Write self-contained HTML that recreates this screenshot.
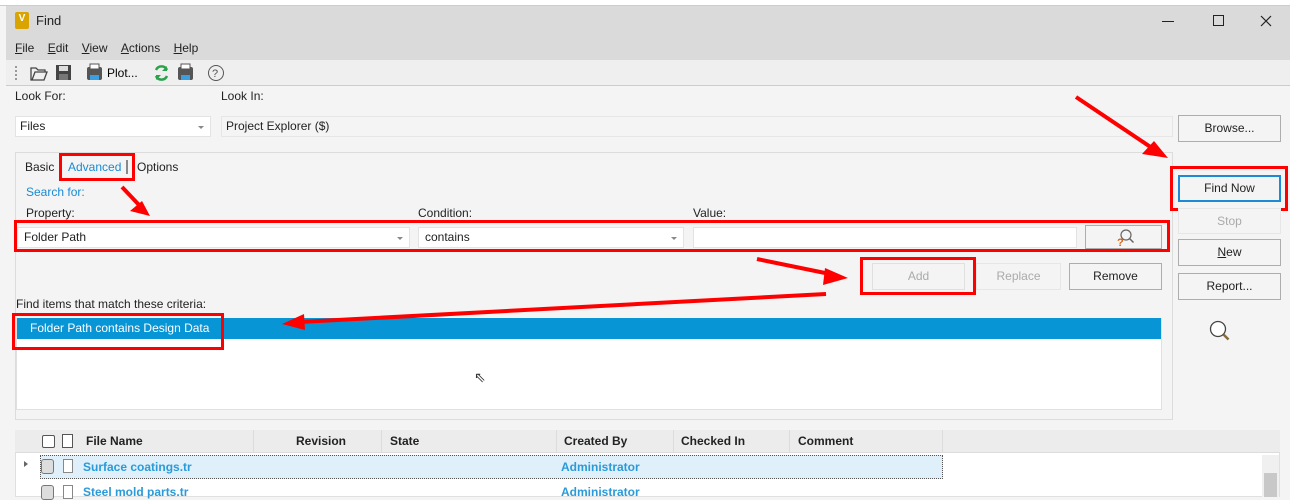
<!DOCTYPE html>
<html><head><style>
*{margin:0;padding:0;box-sizing:border-box}
body{width:1290px;height:497px;overflow:hidden;background:#f4f4f4;font-family:"Liberation Sans",sans-serif;font-size:12px;color:#222;position:relative}
.a{position:absolute}
.btn{position:absolute;border:1px solid #adadad;background:#f4f4f4;text-align:center;font-size:12px;color:#222}
.cb{position:absolute;background:#fff;border:1px solid #e3e3e3;padding-left:6px;font-size:12px}
.cb:after{content:"";position:absolute;right:6px;top:9px;border:3px solid transparent;border-top:3px solid #888}
.red{position:absolute;border:3px solid #f00}
.hd{position:absolute;top:430px;height:23px;line-height:23px;font-weight:bold;font-size:12px;border-right:1px solid #dcdcdc}
</style></head><body>
<div class="a" style="left:0;top:0;width:1290px;height:6px;background:#fff;border-bottom:1px solid #ccc"></div>
<div class="a" style="left:6px;top:6px;width:1284px;height:54px;background:#dadada"></div>
<div class="a" style="left:15px;top:12px;width:14px;height:17px;background:#d9a400;border-radius:2px;color:#fff;font-size:10px;font-weight:bold;text-align:center;line-height:13px">V</div>
<div class="a" style="left:36px;top:13px;font-size:13px">Find</div>
<div class="a" style="left:1162px;top:21px;width:12px;height:1px;background:#222"></div>
<div class="a" style="left:1213px;top:15px;width:11px;height:11px;border:1px solid #222"></div>
<svg class="a" style="left:1260px;top:15px" width="12" height="12"><path d="M1 1l10 10M11 1L1 11" stroke="#222" stroke-width="1.2"/></svg>
<div class="a" style="left:15px;top:41px;font-size:12px;word-spacing:0"><u>F</u>ile&nbsp;&nbsp;&nbsp;&nbsp;<u>E</u>dit&nbsp;&nbsp;&nbsp;&nbsp;<u>V</u>iew&nbsp;&nbsp;&nbsp;&nbsp;<u>A</u>ctions&nbsp;&nbsp;&nbsp;&nbsp;<u>H</u>elp</div>
<div class="a" style="left:6px;top:60px;width:1284px;height:26px;background:#efefef;border-bottom:1px solid #ccc"></div>
<div class="a" style="left:15px;top:66px;width:2px;height:14px;border-left:2px dotted #999"></div>
<svg class="a" style="left:28px;top:62px" width="200" height="22"><path d="M3 6h5l2 2h7v2H7l-3 8H3z M4 18l3-8h12l-3 8z" fill="none" stroke="#444" stroke-width="1.3"/><rect x="28" y="3" width="15" height="15" fill="#444"/><rect x="31" y="4" width="9" height="5" fill="#ddd"/><rect x="31" y="12" width="9" height="6" fill="#777"/><rect x="59" y="5" width="15" height="13" fill="#555" rx="2"/><rect x="62" y="2" width="9" height="5" fill="#fff" stroke="#555"/><rect x="62" y="13" width="9" height="5" fill="#3a9ee0"/><text x="79" y="15" font-size="12" font-family="Liberation Sans">Plot...</text><path d="M128 8a6 6 0 0 1 11 0M139 14a6 6 0 0 1-11 0" stroke="#2aa34a" stroke-width="2.5" fill="none"/><path d="M139 4v5h-5M128 18v-5h5" fill="#2aa34a"/><rect x="150" y="5" width="15" height="13" fill="#555" rx="2"/><rect x="153" y="2" width="9" height="5" fill="#fff" stroke="#555"/><rect x="153" y="13" width="9" height="5" fill="#3a9ee0"/><circle cx="188" cy="11" r="7.5" fill="none" stroke="#555"/><text x="184" y="15" font-size="11" fill="#555" font-family="Liberation Sans">?</text></svg>
<div class="a" style="left:15px;top:89px">Look For:</div>
<div class="a" style="left:221px;top:89px">Look In:</div>
<div class="cb" style="left:15px;top:116px;width:196px;height:21px;line-height:19px;padding-left:4px">Files</div>
<div class="a" style="left:221px;top:116px;width:952px;height:21px;line-height:19px;border:1px solid #e6e6e6;padding-left:4px">Project Explorer ($)</div>
<div class="btn" style="left:1178px;top:115px;width:103px;height:27px;line-height:25px">Browse...</div>
<div class="a" style="left:15px;top:152px;width:1158px;height:268px;border:1px solid #dcdcdc"></div>
<div class="a" style="left:25px;top:160px">Basic</div>
<div class="a" style="left:68px;top:160px;color:#1a8ad4">Advanced</div>
<div class="a" style="left:126px;top:160px;width:2px;height:14px;background:#888"></div>
<div class="a" style="left:137px;top:160px">Options</div>
<div class="red" style="left:59px;top:153px;width:76px;height:28px"></div>
<div class="a" style="left:26px;top:185px;color:#1a8ad4">Search for:</div>
<div class="a" style="left:26px;top:206px">Property:</div>
<div class="a" style="left:418px;top:206px">Condition:</div>
<div class="a" style="left:693px;top:206px">Value:</div>
<div class="cb" style="left:17px;top:227px;width:393px;height:21px;line-height:19px">Folder Path</div>
<div class="cb" style="left:418px;top:227px;width:266px;height:21px;line-height:19px">contains</div>
<div class="a" style="left:693px;top:227px;width:384px;height:21px;background:#fff;border:1px solid #e3e3e3"></div>
<div class="btn" style="left:1085px;top:225px;width:77px;height:24px"><svg width="24" height="20" style="margin-top:1px"><circle cx="14" cy="8" r="5" fill="none" stroke="#666" stroke-width="1.2"/><path d="M17.5 11.5l4 4" stroke="#666" stroke-width="1.5"/><text x="5" y="19" font-size="11" font-weight="bold" fill="#e06010" font-family="Liberation Sans">?</text></svg></div>
<div class="red" style="left:14px;top:220px;width:1156px;height:32px"></div>
<div class="btn" style="left:872px;top:263px;width:93px;height:27px;line-height:25px;color:#aaa;border-color:#e0e0e0">Add</div>
<div class="btn" style="left:976px;top:263px;width:85px;height:27px;line-height:25px;color:#aaa;border-color:#e6e6e6">Replace</div>
<div class="btn" style="left:1069px;top:263px;width:93px;height:27px;line-height:25px">Remove</div>
<div class="red" style="left:860px;top:257px;width:116px;height:38px"></div>
<div class="a" style="left:16px;top:297px">Find items that match these criteria:</div>
<div class="a" style="left:16px;top:318px;width:1146px;height:92px;background:#fff;border:1px solid #e0e0e0"></div>
<div class="a" style="left:17px;top:318px;width:1144px;height:21px;background:#0895d6;color:#fff;line-height:21px;padding-left:13px">Folder Path contains Design Data</div>
<div class="red" style="left:12px;top:313px;width:212px;height:37px"></div>
<div class="a" style="left:474px;top:369px;font-size:14px;color:#333">⇖</div>
<div class="btn" style="left:1178px;top:175px;width:103px;height:27px;line-height:23px;border:2px solid #1d8ad6">Find Now</div>
<div class="red" style="left:1170px;top:166px;width:118px;height:45px"></div>
<div class="btn" style="left:1178px;top:208px;width:103px;height:26px;line-height:24px;color:#aaa;border-color:#e6e6e6">Stop</div>
<div class="btn" style="left:1178px;top:239px;width:103px;height:27px;line-height:25px"><u>N</u>ew</div>
<div class="btn" style="left:1178px;top:273px;width:103px;height:27px;line-height:25px">Report...</div>
<svg class="a" style="left:1206px;top:317px" width="28" height="28"><circle cx="12" cy="12" r="7.5" fill="#fff" stroke="#444" stroke-width="1.3"/><path d="M17.5 17.5l5 5" stroke="#8a6a3a" stroke-width="2.5"/></svg>
<svg class="a" style="left:0;top:0" width="1290" height="497"><g fill="#f00" stroke="#f00" stroke-width="4"><line x1="1076" y1="97" x2="1152" y2="148"/><line x1="122" y1="187" x2="140" y2="206"/><line x1="757" y1="259" x2="830" y2="274"/><line x1="826" y1="294" x2="300" y2="322"/></g><g fill="#f00"><path d="M1168 158l-26-4 12-13z"/><path d="M150 216l-20-5 12-10z"/><path d="M848 278l-25 7 2-17z"/><path d="M282 324l22-10 1 16z"/></g></svg>
<div class="a" style="left:15px;top:430px;width:1265px;height:67px;background:#fff;border:1px solid #e0e0e0"></div>
<div class="a" style="left:15px;top:430px;width:1265px;height:23px;background:#ececec;border-bottom:1px solid #dcdcdc"></div>
<div class="a" style="left:42px;top:435px;width:13px;height:13px;border:1px solid #555;border-radius:2px;background:#fff"></div>
<div class="a" style="left:62px;top:434px;width:11px;height:14px;border:1px solid #555;background:#fff"></div>
<div class="hd" style="left:86px;width:168px">File Name</div>
<div class="hd" style="left:254px;width:128px;padding-left:42px">Revision</div>
<div class="hd" style="left:382px;width:175px;padding-left:8px">State</div>
<div class="hd" style="left:557px;width:117px;padding-left:7px">Created By</div>
<div class="hd" style="left:674px;width:116px;padding-left:7px">Checked In</div>
<div class="hd" style="left:790px;width:153px;padding-left:8px">Comment</div>
<div class="a" style="left:40px;top:455px;width:903px;height:24px;background:#dff0fa;border:1px dotted #555"></div>
<div class="a" style="left:24px;top:461px;border:3px solid transparent;border-left:4px solid #666"></div>
<div class="a" style="left:41px;top:459px;width:13px;height:15px;border:1px solid #777;border-radius:3px;background:#ddd"></div>
<div class="a" style="left:63px;top:459px;width:10px;height:14px;border:1px solid #888;background:#fff"></div>
<div class="a" style="left:83px;top:460px;color:#2a9ad8;font-weight:bold">Surface coatings.tr</div>
<div class="a" style="left:561px;top:460px;color:#2a9ad8;font-weight:bold">Administrator</div>
<div class="a" style="left:41px;top:485px;width:13px;height:15px;border:1px solid #777;border-radius:3px;background:#ddd"></div>
<div class="a" style="left:63px;top:485px;width:10px;height:14px;border:1px solid #888;background:#fff"></div>
<div class="a" style="left:83px;top:485px;color:#2a9ad8;font-weight:bold">Steel mold parts.tr</div>
<div class="a" style="left:561px;top:485px;color:#2a9ad8;font-weight:bold">Administrator</div>
<div class="a" style="left:1262px;top:455px;width:17px;height:42px;background:#f0f0f0"></div>
<div class="a" style="left:1264px;top:473px;width:13px;height:24px;background:#c8c8c8"></div>
</body></html>
